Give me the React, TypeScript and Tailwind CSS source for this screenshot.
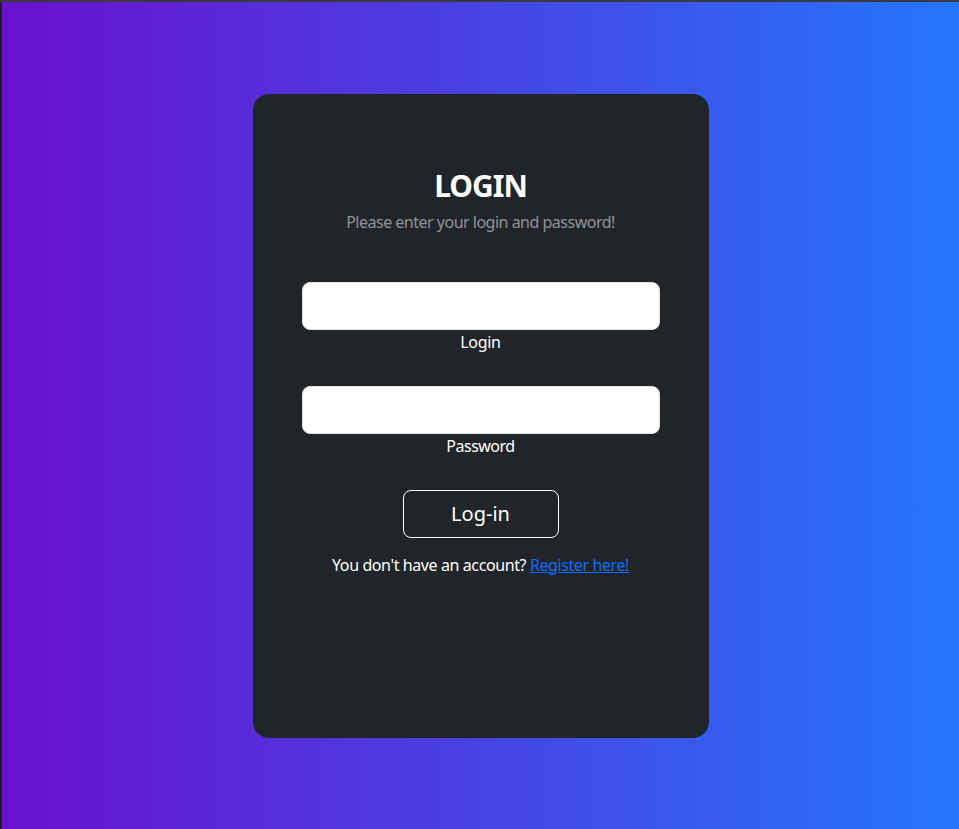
import React from "react";

export default function App() {
  return (
    <div className="flex h-[829px] w-[959px] flex-col bg-[#333333] font-['Noto_Sans',sans-serif]">
      <div className="h-[2px] w-full bg-[#3a3a3a]" />
      <div className="flex flex-1">
        <div className="w-[2px] bg-[#1e1e1e]" />
        <div className="flex flex-1 items-center justify-center bg-[linear-gradient(to_right,#6a11cb,#2575fc)]">
          <div className="flex h-[644px] w-[456px] flex-col items-center rounded-[16px] bg-[#212529] px-[49px] pt-[73px] text-center text-white">
            <h2 className="text-[30px] font-bold leading-[38px] tracking-[-1px] uppercase">Login</h2>
            <p className="mt-[5px] text-[16px] leading-[24px] tracking-[-0.5px] text-[rgba(255,255,255,0.5)]">
              Please enter your login and password!
            </p>
            <div className="mt-[48px] flex w-full flex-col items-center">
              <input
                type="text"
                className="h-[48px] w-full rounded-[8px] border border-[#dee2e6] bg-white px-4 text-[20px] text-[#212529] outline-none"
              />
              <label className="mb-[8px] text-[16px] leading-[24px] tracking-[-0.3px]">Login</label>
            </div>
            <div className="mt-[24px] flex w-full flex-col items-center">
              <input
                type="password"
                className="h-[48px] w-full rounded-[8px] border border-[#dee2e6] bg-white px-4 text-[20px] text-[#212529] outline-none"
              />
              <label className="mb-[8px] text-[16px] leading-[24px] tracking-[-0.5px]">Password</label>
            </div>
            <button className="mt-[24px] h-[48px] w-[156px] rounded-[8px] border border-white text-[20px] leading-[30px] text-white">
              Log-in
            </button>
            <p className="mt-[15px] text-[16px] leading-[24px] tracking-[-0.4px]">
              You don't have an account?{" "}
              <a href="#" className="text-[#0d6efd] underline">
                Register here!
              </a>
            </p>
          </div>
        </div>
      </div>
    </div>
  );
}
